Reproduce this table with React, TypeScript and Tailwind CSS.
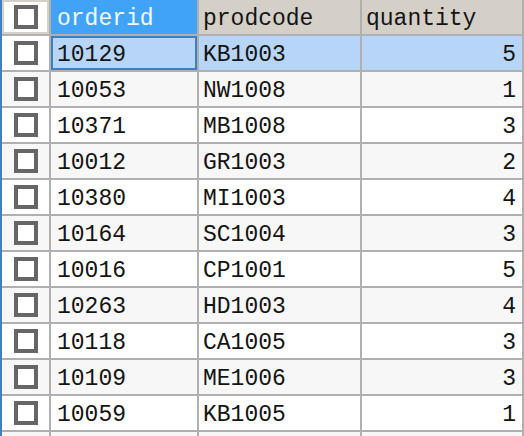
import React from 'react'

type Row = { orderid: string; prodcode: string; quantity: string }

const rows: Row[] = [
  { orderid: '10129', prodcode: 'KB1003', quantity: '5' },
  { orderid: '10053', prodcode: 'NW1008', quantity: '1' },
  { orderid: '10371', prodcode: 'MB1008', quantity: '3' },
  { orderid: '10012', prodcode: 'GR1003', quantity: '2' },
  { orderid: '10380', prodcode: 'MI1003', quantity: '4' },
  { orderid: '10164', prodcode: 'SC1004', quantity: '3' },
  { orderid: '10016', prodcode: 'CP1001', quantity: '5' },
  { orderid: '10263', prodcode: 'HD1003', quantity: '4' },
  { orderid: '10118', prodcode: 'CA1005', quantity: '3' },
  { orderid: '10109', prodcode: 'ME1006', quantity: '3' },
  { orderid: '10059', prodcode: 'KB1005', quantity: '1' },
]

const cols = 'grid grid-cols-[49px_148px_163px_162px]'
const cell = 'h-[36px] border-r-2 border-b-2 border-[#b0b0b0] flex items-center'
const text = 'pt-[5px]'

function Checkbox() {
  return <div className="w-[24px] h-[24px] border-4 border-[#666666] bg-white" />
}

export default function App() {
  return (
    <div
      className="w-[524px] h-[436px] overflow-hidden bg-white flex text-[23px] leading-none text-[#141414]"
      style={{ fontFamily: '"Liberation Mono", "Courier New", monospace' }}
    >
      {/* left selection stripe */}
      <div className="w-[2px] shrink-0 bg-[#3f7fc3]" />

      <div className="flex flex-col">
        {/* header */}
        <div className={cols}>
          <div className="h-[36px] border-r-2 border-b-2 border-[#b0b0b0]">
            <div className="h-full border-2 border-[#d4d0c8] bg-white flex items-center justify-center">
              <Checkbox />
            </div>
          </div>
          <div className={`${cell} ${text} bg-[#41a3f6] text-[#f2f9ff] pl-[6px]`}>orderid</div>
          <div className={`${cell} ${text} bg-[#d4d0c8] pl-[4px]`}>prodcode</div>
          <div className={`${cell} ${text} bg-[#d4d0c8] pl-[4px]`}>quantity</div>
        </div>

        {/* rows */}
        {rows.map((r, i) => {
          const selected = i === 0
          const stripe = i % 2 === 1 ? 'bg-[#f7f7f7]' : 'bg-white'
          const dataBg = selected ? 'bg-[#b7d6f7]' : stripe
          return (
            <div key={r.orderid} className={cols}>
              <div className={`${cell} ${stripe} justify-center`}>
                <Checkbox />
              </div>
              {selected ? (
                <div className="h-[36px] border-r-2 border-b-2 border-[#b0b0b0] bg-[#b7d6f7]">
                  <div className={`h-full border-2 border-[#3d80c2] flex items-center pl-[4px] ${text}`}>
                    {r.orderid}
                  </div>
                </div>
              ) : (
                <div className={`${cell} ${text} ${dataBg} pl-[6px]`}>{r.orderid}</div>
              )}
              <div className={`${cell} ${text} ${dataBg} pl-[4px]`}>{r.prodcode}</div>
              <div className={`${cell} ${text} ${dataBg} justify-end pr-[6px]`}>{r.quantity}</div>
            </div>
          )
        })}

        {/* next row, only its top edge shows */}
        <div className={cols}>
          <div className={`${cell} bg-[#f7f7f7]`} />
          <div className={`${cell} bg-[#f7f7f7]`} />
          <div className={`${cell} bg-[#f7f7f7]`} />
          <div className={`${cell} bg-[#f7f7f7]`} />
        </div>
      </div>
    </div>
  )
}
